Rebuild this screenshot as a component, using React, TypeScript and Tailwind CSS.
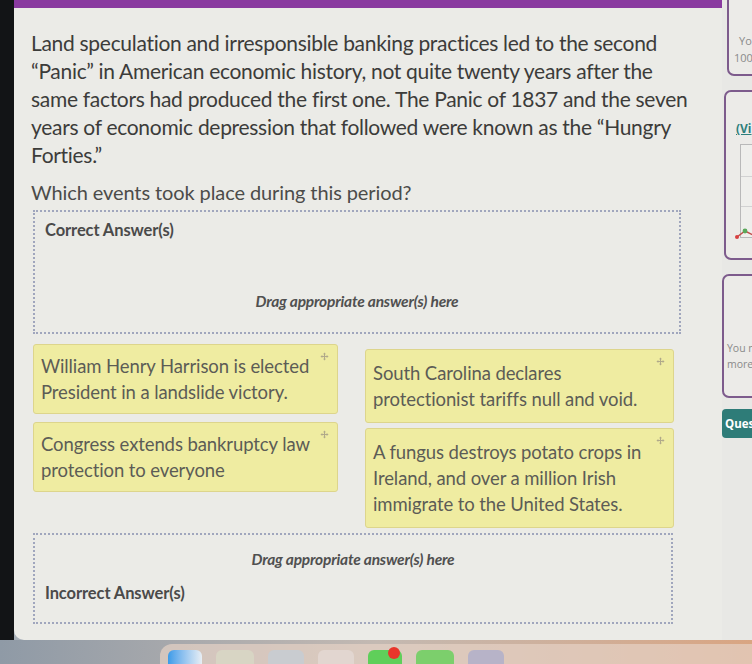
import React from "react";

type Item = { id: number; text: string };

const leftItems: Item[] = [
  { id: 1, text: "William Henry Harrison is elected President in a landslide victory." },
  { id: 3, text: "Congress extends bankruptcy law protection to everyone" },
];

const rightItems: Item[] = [
  { id: 2, text: "South Carolina declares protectionist tariffs null and void." },
  { id: 4, text: "A fungus destroys potato crops in Ireland, and over a million Irish immigrate to the United States." },
];

const MoveIcon = () => (
  <svg width="9" height="9" viewBox="0 0 10 10" className="absolute right-[8px] top-[7px]">
    <path d="M5 0.5 L6.6 2.6 H5.6 V4.4 H7.4 V3.4 L9.5 5 L7.4 6.6 V5.6 H5.6 V7.4 H6.6 L5 9.5 L3.4 7.4 H4.4 V5.6 H2.6 V6.6 L0.5 5 L2.6 3.4 V4.4 H4.4 V2.6 H3.4 Z" fill="#b0a98a" />
  </svg>
);

const AnswerCard = ({ item, w }: { item: Item; w: string }) => (
  <div
    className={`relative ${w} rounded-[3px] border border-[#ddd58c] bg-[#efeca1] pl-[7px] pr-[14px] text-[18.5px] leading-[26px] tracking-[-0.1px] text-[#5c5c56]`}
  >
    {item.text}
    <MoveIcon />
  </div>
);

const DropHint = () => (
  <p className="text-center text-[15.5px] font-bold italic tracking-[-0.2px] text-[#505050]">
    Drag appropriate answer(s) here
  </p>
);

// right-hand panel, mostly scrolled out of view
const Sidebar = () => (
  <div className="flex w-[120px] shrink-0 flex-col font-['Open_Sans',sans-serif]">
    <div className="-mt-[6px] ml-[5px] h-[82px] rounded-[7px] border-2 border-[#7d5b8c] bg-[#ecebe8] pl-[10px] pt-[36px] text-[11px] leading-[17px] text-[#8a8a8a]">
      <p>Yo</p>
      <p className="-ml-[5px]">100</p>
    </div>
    <div className="ml-[2px] mt-[14px] h-[170px] rounded-[7px] border-2 border-[#7d5b8c] bg-[#ecebe8] pl-[10px] pt-[28px]">
      <p className="text-[12px] font-bold text-[#2f7f7c] underline">(Vi</p>
      <div className="relative ml-[4px] mt-[6px] h-[94px] border border-[#b9b9b9] bg-[#efefec]">
        <div className="h-[32px] border-b border-[#d2d2d2]" />
        <div className="h-[30px] border-b border-[#d2d2d2]" />
        <svg width="40" height="14" className="absolute -bottom-[4px] -left-[6px]">
          <polyline points="2,10 10,4 18,8 30,6" fill="none" stroke="#c0504d" strokeWidth="1.5" />
          <circle cx="2" cy="10" r="2" fill="#d84040" />
          <circle cx="10" cy="4" r="2.4" fill="#5aa85a" />
        </svg>
      </div>
    </div>
    <div className="mt-[14px] h-[124px] rounded-[7px] border-2 border-[#7d5b8c] bg-[#ecebe8] pl-[3px] pt-[64px] text-[10.5px] leading-[16px] text-[#8a8a8a]">
      <p>You n</p>
      <p>more</p>
    </div>
    <div className="mt-[11px] flex h-[29px] items-center rounded-[4px] bg-[#2e7c78] pl-[3px] text-[11.5px] font-bold text-white">
      Ques
    </div>
  </div>
);

const Dock = () => (
  <div className="flex h-[24px] shrink-0 bg-gradient-to-r from-[#8f9aa6] via-[#c3b9b2] to-[#d9a582]">
    <div className="ml-[160px] mt-[4px] flex h-[24px] flex-1 gap-[14px] rounded-tl-[12px] bg-[#e6d2c4]/70 pl-[8px] pt-[6px]">
      <div className="h-[20px] w-[34px] rounded-t-[6px] bg-gradient-to-r from-[#3a9be8] to-[#e8eef4]" />
      <div className="h-[20px] w-[38px] rounded-t-[6px] bg-[#d8d5c4]" />
      <div className="h-[20px] w-[36px] rounded-t-[6px] bg-[#c9ccd0]" />
      <div className="h-[20px] w-[36px] rounded-t-[6px] bg-[#e2d6d0]" />
      <div className="relative h-[20px] w-[34px] rounded-t-[6px] bg-[#5fcf5a]">
        <div className="absolute -top-[3px] right-[2px] h-[12px] w-[12px] rounded-full bg-[#e8352b]" />
      </div>
      <div className="h-[20px] w-[38px] rounded-t-[6px] bg-[#7ccf6c]" />
      <div className="h-[20px] w-[36px] rounded-t-[6px] bg-[#b7b3c8]" />
    </div>
  </div>
);

export default function App() {
  return (
    <div className="flex h-[664px] w-[752px] flex-col overflow-hidden bg-[#a8b0b8] font-['Lato',sans-serif]">
      <div className="flex min-h-0 flex-1">
        <div className="w-[14px] shrink-0 bg-[#121416]" />
        <main className="flex w-[708px] shrink-0 flex-col rounded-bl-[10px] bg-[#ebebe7]">
          <div className="h-[8px] bg-[#8a3aa0]" />
          <div className="px-[17px] pt-[21px]">
            <p className="w-[664px] text-[21px] leading-[28px] tracking-[-0.3px] text-[#3c3c3a]">
              Land speculation and irresponsible banking practices led to the second “Panic” in American economic
              history, not quite twenty years after the same factors had produced the first one. The Panic of 1837
              and the seven years of economic depression that followed were known as the “Hungry Forties.”
            </p>
            <p className="mt-[9px] text-[20px] leading-[28px] tracking-[-0.1px] text-[#4c4c4a]">
              Which events took place during this period?
            </p>

            <section className="ml-[2px] mt-[4px] flex h-[124px] w-[648px] flex-col border-2 border-dotted border-[#a0a6bd] pl-[10px] pt-[6px]">
              <h3 className="text-[16.5px] font-bold tracking-[-0.1px] text-[#4a4a4a]">Correct Answer(s)</h3>
              <div className="mt-[47px] pr-[10px]">
                <DropHint />
              </div>
            </section>

            <div className="ml-[2px] mt-[10px] flex gap-[27px]">
              <div className="flex flex-col gap-[8px] [&>div]:py-[8px]">
                {leftItems.map((it) => (
                  <AnswerCard key={it.id} item={it} w="w-[305px]" />
                ))}
              </div>
              <div className="mt-[5px] flex flex-col gap-[5px] [&>div]:py-[10px]">
                {rightItems.map((it) => (
                  <AnswerCard key={it.id} item={it} w="w-[309px]" />
                ))}
              </div>
            </div>

            <section className="ml-[2px] mt-[5px] flex h-[91px] w-[640px] flex-col border-2 border-dotted border-[#a0a6bd] pl-[10px] pt-[13px]">
              <div className="pr-[10px]">
                <DropHint />
              </div>
              <h3 className="mt-[10px] text-[16.5px] font-bold tracking-[-0.1px] text-[#4a4a4a]">Incorrect Answer(s)</h3>
            </section>
          </div>
        </main>
        <div className="flex-1 overflow-hidden bg-[#e8e8e5]">
          <Sidebar />
        </div>
      </div>
      <Dock />
    </div>
  );
}
